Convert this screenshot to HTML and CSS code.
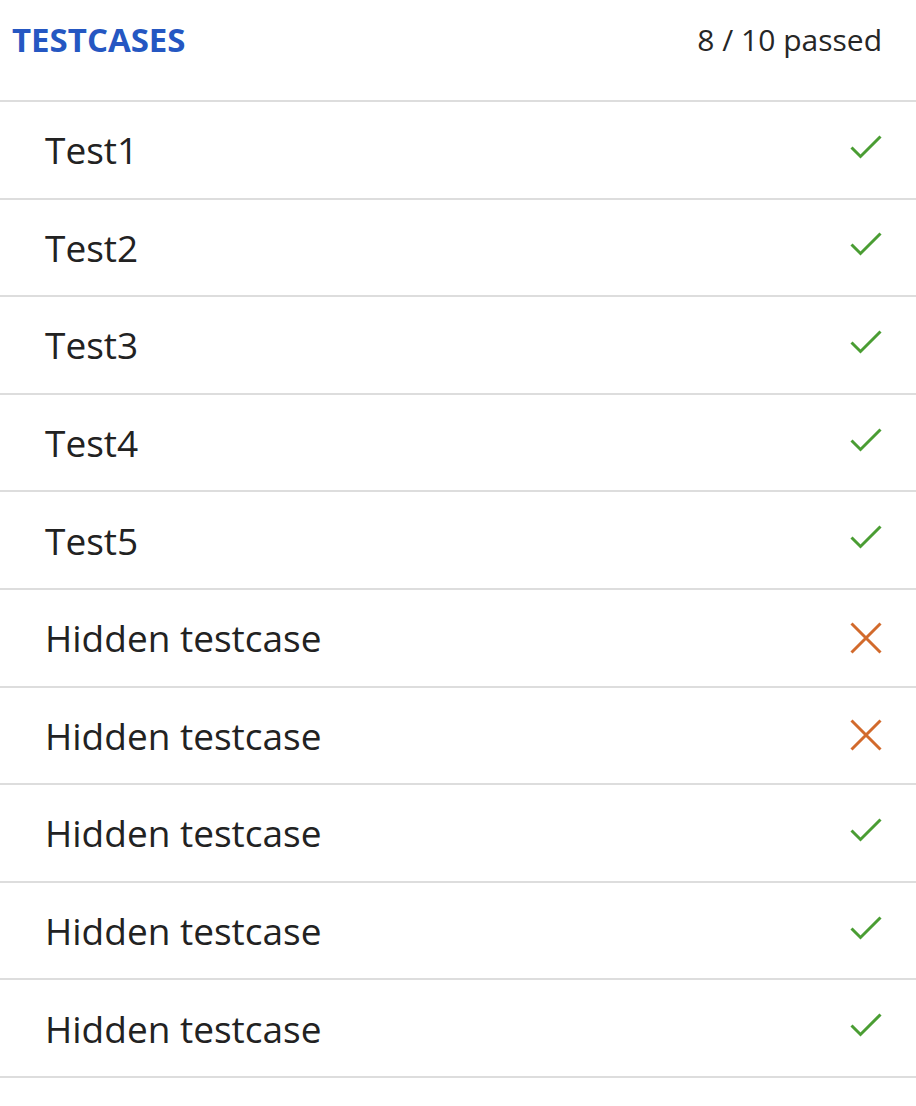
FILE: index.html
```html
<!DOCTYPE html>
<html lang="en">
<head>
  <meta charset="UTF-8" />
  <meta name="viewport" content="width=device-width, initial-scale=1.0"/>
  <title>Testcases</title>
  <link rel="stylesheet" href="styles.css">
</head>
<body>
  <div class="panel">
    <div class="header">
      <span class="title">TESTCASES</span>
      <span class="summary">8 / 10 passed</span>
    </div>
    <ul class="cases">
      <li class="case"><span>Test1</span><svg class="icon pass" viewBox="0 0 32 32"><path d="M1.5 13.5 L10.5 22.5 L30.5 2.5"/></svg></li>
      <li class="case"><span>Test2</span><svg class="icon pass" viewBox="0 0 32 32"><path d="M1.5 13.5 L10.5 22.5 L30.5 2.5"/></svg></li>
      <li class="case"><span>Test3</span><svg class="icon pass" viewBox="0 0 32 32"><path d="M1.5 13.5 L10.5 22.5 L30.5 2.5"/></svg></li>
      <li class="case"><span>Test4</span><svg class="icon pass" viewBox="0 0 32 32"><path d="M1.5 13.5 L10.5 22.5 L30.5 2.5"/></svg></li>
      <li class="case"><span>Test5</span><svg class="icon pass" viewBox="0 0 32 32"><path d="M1.5 13.5 L10.5 22.5 L30.5 2.5"/></svg></li>
      <li class="case"><span>Hidden testcase</span><svg class="icon fail" viewBox="0 0 32 32"><path d="M1.5 1.5 L30.5 30.5 M30.5 1.5 L1.5 30.5"/></svg></li>
      <li class="case"><span>Hidden testcase</span><svg class="icon fail" viewBox="0 0 32 32"><path d="M1.5 1.5 L30.5 30.5 M30.5 1.5 L1.5 30.5"/></svg></li>
      <li class="case"><span>Hidden testcase</span><svg class="icon pass" viewBox="0 0 32 32"><path d="M1.5 13.5 L10.5 22.5 L30.5 2.5"/></svg></li>
      <li class="case"><span>Hidden testcase</span><svg class="icon pass" viewBox="0 0 32 32"><path d="M1.5 13.5 L10.5 22.5 L30.5 2.5"/></svg></li>
      <li class="case"><span>Hidden testcase</span><svg class="icon pass" viewBox="0 0 32 32"><path d="M1.5 13.5 L10.5 22.5 L30.5 2.5"/></svg></li>
    </ul>
  </div>
</body>
</html>
```

FILE: styles.css
```css
body {
  margin: 0;
  background-color: #ffffff;
  font-family: "Open Sans", "Noto Sans", sans-serif;
  color: #222222;
}

.panel {
  width: 916px;
}

.header {
  height: 102px;
  box-sizing: border-box;
  display: flex;
  align-items: center;
  justify-content: space-between;
  padding: 0 34px 22px 12px;
  border-bottom: 2px solid #dddddd;
}

.title {
  font-size: 33px;
  font-weight: bold;
  color: #2557c2;
}

.summary {
  font-size: 30px;
  color: #262626;
}

.cases {
  list-style: none;
  margin: 0;
  padding: 0;
}

.case {
  height: 97.6px;
  box-sizing: border-box;
  display: flex;
  align-items: center;
  justify-content: space-between;
  padding: 0 34px 0 45px;
  border-bottom: 2px solid #dddddd;
  font-size: 37px;
}

.icon {
  width: 32px;
  height: 32px;
  fill: none;
  stroke-width: 3;
}

.icon.pass {
  stroke: #4a9d33;
}

.icon.fail {
  stroke: #d26a2c;
}
```
